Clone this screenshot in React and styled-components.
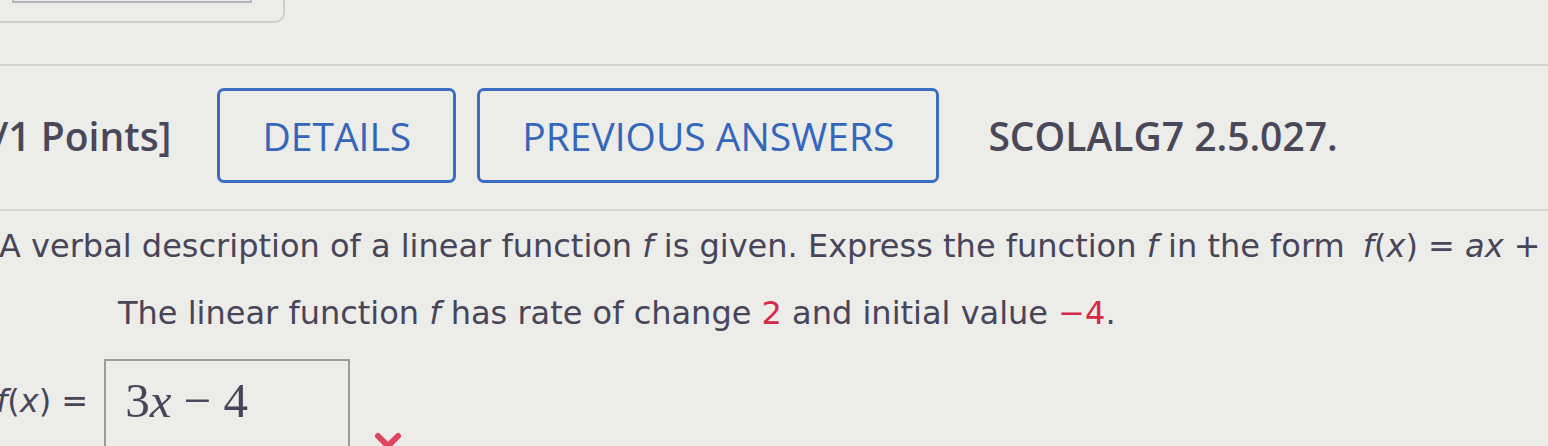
import React from 'react';
import styled, { createGlobalStyle } from 'styled-components';

const GlobalStyle = createGlobalStyle`
 html,
 body {
  margin: 0;
  padding: 0;
  background: #ecece9;
 }
`;

const Page = styled.div`
 width: 1548px;
 height: 446px;
 overflow: hidden;
 background: #ecece9;
 color: #48455a;
`;

const TopArea = styled.div`
 height: 64px;
 overflow: hidden;
`;

const PrevCard = styled.div`
 width: 305px;
 height: 40px;
 margin: -17px 0 0 -20px;
 border: 2px solid #cfcdd1;
 border-radius: 10px;
 box-sizing: border-box;
 overflow: hidden;
`;

const PrevInner = styled.div`
 width: 240px;
 height: 18px;
 margin: 0 0 0 30px;
 border: 2px solid #b7b2c3;
 border-top: 0;
 box-sizing: border-box;
`;

const Rule = styled.div`
 height: 2px;
 background: ${(p) => p.$tone || '#d4d3d2'};
`;

const HeaderRow = styled.div`
 display: flex;
 align-items: center;
 padding: 22px 0 26px;
 margin-left: -42px;
 font-family: 'Open Sans', 'Liberation Sans', sans-serif;
 font-size: 39px;
 white-space: nowrap;
`;

const Points = styled.span`
 font-weight: 600;
 color: #4b475a;
 margin-right: 46px;
`;

const OutlineButton = styled.button`
 height: 95px;
 padding: 0 42px;
 margin-right: ${(p) => p.$gap || 0}px;
 border: 3px solid #3a6cc2;
 border-radius: 7px;
 background: transparent;
 font-family: inherit;
 font-size: 39px;
 font-weight: 500;
 color: #3466bc;
 cursor: pointer;
`;

const Code = styled.span`
 font-weight: 600;
 color: #4b475a;
`;

const Body = styled.div`
 padding-top: 15px;
 font-family: 'DejaVu Sans', Verdana, sans-serif;
 font-size: 32px;
 line-height: 40px;
 white-space: nowrap;
`;

const Prompt = styled.div`
 margin-left: -1px;
`;

const MathGap = styled.span`
 display: inline-block;
 width: 18px;
`;

const Detail = styled.div`
 margin: 27px 0 0 118px;
`;

const Var = styled.i`
 font-style: italic;
`;

const Red = styled.span`
 color: #d42a45;
`;

const AnswerRow = styled.div`
 display: flex;
 align-items: flex-start;
 margin: 26px 0 0 -4px;
`;

const Label = styled.span`
 margin-top: 22px;
 margin-right: 16px;
`;

const AnswerBox = styled.div`
 width: 246px;
 height: 110px;
 padding: 16px 0 0 19px;
 box-sizing: border-box;
 border: 2px solid #9b9a9e;
 font-family: 'Liberation Serif', 'DejaVu Serif', serif;
 font-size: 49px;
 line-height: 48px;
 color: #48455a;
`;

const WrongMark = styled.svg`
 margin: 72px 0 0 23px;
 flex-shrink: 0;
`;

const App = () => {
 return (
  <>
   <GlobalStyle />
   <Page>
    <TopArea>
     <PrevCard>
      <PrevInner />
     </PrevCard>
    </TopArea>
    <Rule />
    <HeaderRow>
     <Points>[0/1 Points]</Points>
     <OutlineButton $gap={21}>DETAILS</OutlineButton>
     <OutlineButton $gap={49}>PREVIOUS ANSWERS</OutlineButton>
     <Code>SCOLALG7 2.5.027.</Code>
    </HeaderRow>
    <Rule $tone='#d7d6d5' />
    <Body>
     <Prompt>
      A verbal description of a linear function <Var>f</Var> is given. Express the function <Var>f</Var> in the form
      <MathGap />
      <Var>f</Var>(<Var>x</Var>) = <Var>ax</Var> + <Var>b</Var>.
     </Prompt>
     <Detail>
      The linear function <Var>f</Var> has rate of change <Red>2</Red> and initial value <Red>−4</Red>.
     </Detail>
     <AnswerRow>
      <Label>
       <Var>f</Var>(<Var>x</Var>) =
      </Label>
      <AnswerBox>
       3<i>x</i> − 4
      </AnswerBox>
      <WrongMark width='30' height='30' viewBox='0 0 30 30'>
       <path d='M5 5 L25 25 M25 5 L5 25' stroke='#e0455d' strokeWidth='6' strokeLinecap='round' fill='none' />
      </WrongMark>
     </AnswerRow>
    </Body>
   </Page>
  </>
 );
};

export default App;
